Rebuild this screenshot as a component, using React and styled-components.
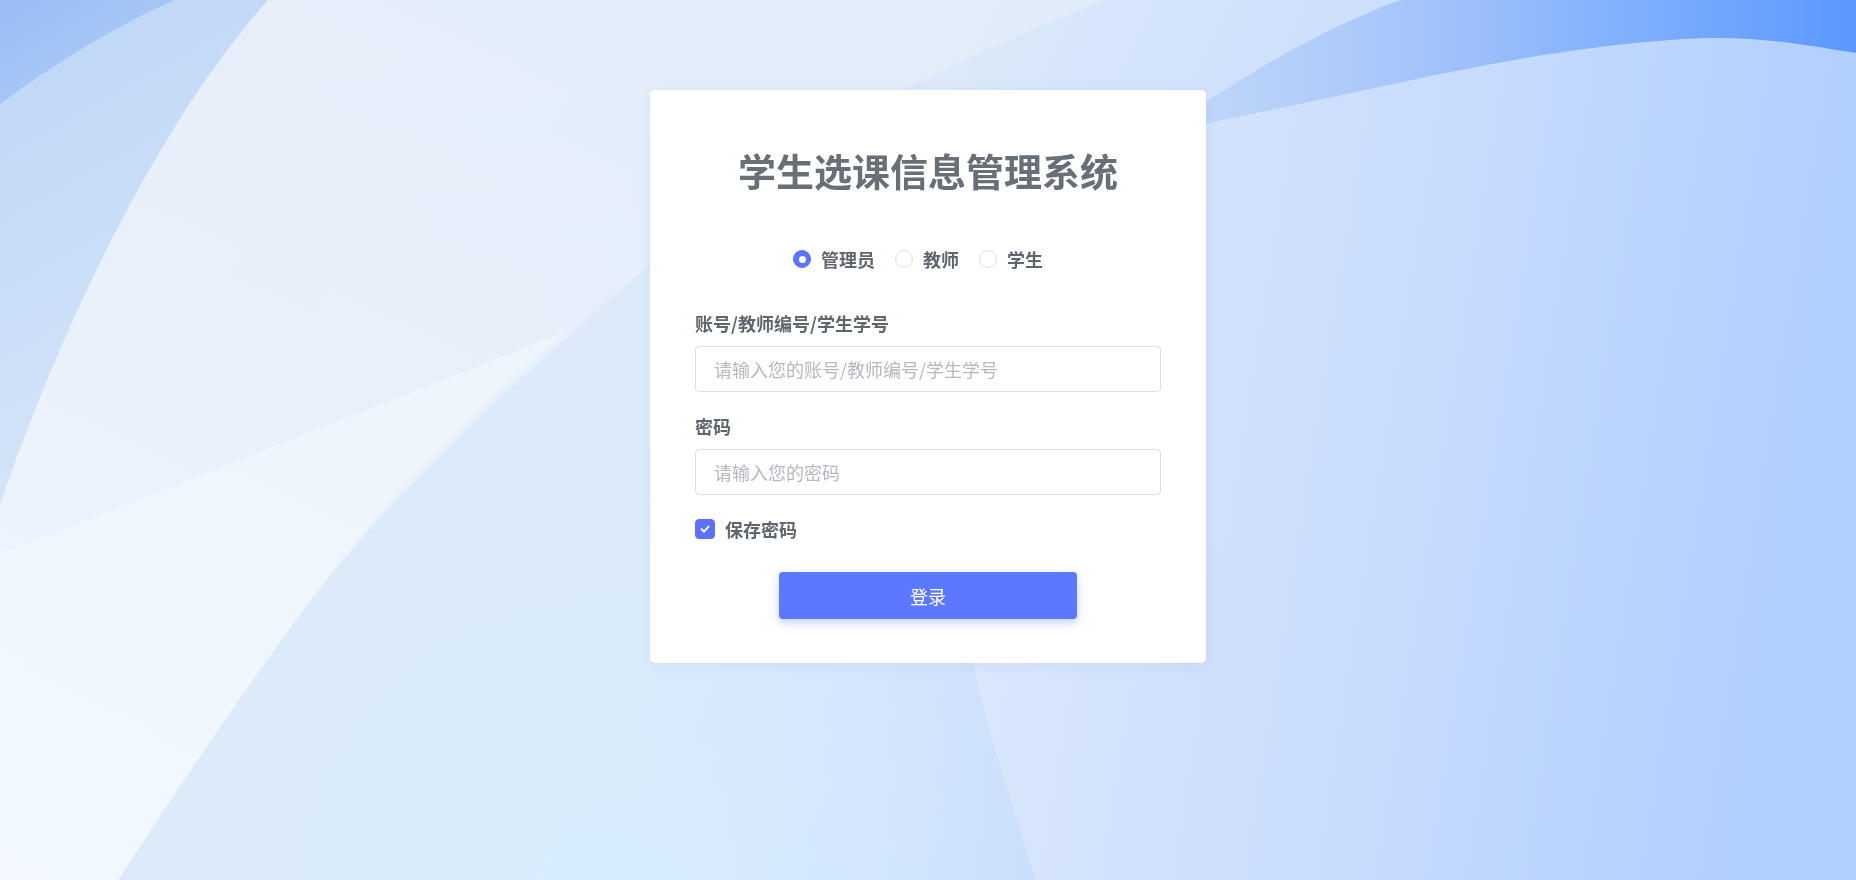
import { useState } from "react";
import styled, { createGlobalStyle } from "styled-components";

const GlobalStyle = createGlobalStyle`
  html, body {
    margin: 0;
    padding: 0;
    height: 100%;
  }
  body {
    font-family: "Noto Sans CJK SC", "Noto Sans", "Liberation Sans", sans-serif;
    color: #60666e;
    overflow: hidden;
  }
  * {
    box-sizing: border-box;
  }
`;

const Backdrop = styled.svg`
  position: fixed;
  inset: 0;
  width: 100%;
  height: 100%;
  z-index: 0;
  display: block;
`;

const Page = styled.main`
  position: relative;
  z-index: 1;
  min-height: 100vh;
  display: flex;
  justify-content: center;
  align-items: flex-start;
  padding-top: 90px;
`;

const Card = styled.section`
  width: 556px;
  padding: 55px 45px 44px;
  background: #fff;
  border-radius: 5px;
  box-shadow: 0 2px 14px rgba(80, 120, 200, 0.08);
`;

const Title = styled.h1`
  margin: 0;
  text-align: center;
  font-size: 38px;
  line-height: 50px;
  font-weight: 700;
  color: #686f77;
`;

const RoleGroup = styled.div`
  margin-top: 52px;
  display: flex;
  justify-content: center;
`;

const RoleOption = styled.label`
  display: flex;
  align-items: center;
  gap: 10px;
  margin-right: 20px;
  height: 24px;
  cursor: pointer;
  font-size: 18px;
  font-weight: 700;
  color: #60666e;
  user-select: none;
`;

const RadioDot = styled.span`
  width: 18px;
  height: 18px;
  border-radius: 50%;
  border: 1px solid ${(p) => (p.$on ? "#5b72ff" : "#dcdfe6")};
  background: ${(p) => (p.$on ? "#5b72ff" : "#fff")};
  display: flex;
  align-items: center;
  justify-content: center;
  &::after {
    content: "";
    width: 7px;
    height: 7px;
    border-radius: 50%;
    background: #fff;
    display: ${(p) => (p.$on ? "block" : "none")};
  }
`;

const Form = styled.form`
  margin-top: 40px;
`;

const Field = styled.div`
  & + & {
    margin-top: 22px;
  }
`;

const FieldLabel = styled.label`
  display: block;
  margin-bottom: 11px;
  font-size: 18px;
  line-height: 24px;
  font-weight: 700;
  color: #60666e;
`;

const TextInput = styled.input`
  display: block;
  width: 100%;
  height: 46px;
  padding: 0 18px;
  border: 1px solid #dcdfe6;
  border-radius: 4px;
  background: #fff;
  font-family: inherit;
  font-size: 18px;
  color: #60666e;
  outline: none;
  &::placeholder {
    color: #b4b8bf;
  }
  &:focus {
    border-color: #5c78ff;
  }
`;

const Remember = styled.label`
  margin-top: 22px;
  display: flex;
  align-items: center;
  gap: 10px;
  height: 24px;
  font-size: 18px;
  font-weight: 700;
  color: #60666e;
  cursor: pointer;
  user-select: none;
`;

const CheckBox = styled.span`
  width: 20px;
  height: 20px;
  border-radius: 4px;
  border: 1px solid ${(p) => (p.$on ? "#5e72f9" : "#dcdfe6")};
  background: ${(p) => (p.$on ? "#5e72f9" : "#fff")};
  display: flex;
  align-items: center;
  justify-content: center;
  svg {
    display: ${(p) => (p.$on ? "block" : "none")};
  }
`;

const SubmitButton = styled.button`
  display: block;
  margin: 31px auto 0;
  width: 298px;
  height: 47px;
  border: none;
  border-radius: 4px;
  background: #5c78ff;
  color: #fff;
  font-family: inherit;
  font-size: 18px;
  cursor: pointer;
  box-shadow: 0 4px 10px rgba(92, 120, 255, 0.35);
  &:hover {
    background: #6f87ff;
  }
`;

const roles = [
  { key: "admin", label: "管理员" },
  { key: "teacher", label: "教师" },
  { key: "student", label: "学生" },
];

// decorative wallpaper, drawn once behind the page
const Wallpaper = () => (
  <Backdrop viewBox="0 0 1856 880" preserveAspectRatio="none">
    <defs>
      <linearGradient id="base" x1="0" y1="0" x2="1" y2="0.25">
        <stop offset="0" stopColor="#e0ebf9" />
        <stop offset="0.5" stopColor="#dce9fa" />
        <stop offset="1" stopColor="#b4cffe" />
      </linearGradient>
      <radialGradient id="sky" cx="600" cy="900" r="520" gradientUnits="userSpaceOnUse">
        <stop offset="0" stopColor="#d7edfd" />
        <stop offset="1" stopColor="#d7edfd" stopOpacity="0" />
      </radialGradient>
      <linearGradient id="swoosh" x1="0" y1="1" x2="0.6" y2="0">
        <stop offset="0" stopColor="#f4faff" stopOpacity="0.95" />
        <stop offset="0.45" stopColor="#eef4fc" stopOpacity="0.7" />
        <stop offset="1" stopColor="#e8eff9" stopOpacity="0.55" />
      </linearGradient>
      <linearGradient id="leftBlue" x1="0" y1="0" x2="0.3" y2="1">
        <stop offset="0" stopColor="#bcd5f7" />
        <stop offset="1" stopColor="#d6e5f8" />
      </linearGradient>
      <linearGradient id="corner" x1="0" y1="0" x2="1" y2="1">
        <stop offset="0" stopColor="#98bdf5" />
        <stop offset="1" stopColor="#b2cef6" />
      </linearGradient>
      <linearGradient id="rightShape" x1="0" y1="0" x2="1" y2="0.15">
        <stop offset="0" stopColor="#dfeafb" />
        <stop offset="0.55" stopColor="#c8dcfd" />
        <stop offset="1" stopColor="#b0cefe" />
      </linearGradient>
      <linearGradient id="band" x1="0" y1="0" x2="1" y2="0">
        <stop offset="0" stopColor="#c6daf8" />
        <stop offset="0.4" stopColor="#a2c3fa" />
        <stop offset="1" stopColor="#5a98ff" />
      </linearGradient>
    </defs>
    <rect width="1856" height="880" fill="url(#base)" />
    <rect width="1856" height="880" fill="url(#sky)" />
    <path d="M0 0 L268 0 C170 110 70 300 0 505 Z" fill="url(#leftBlue)" />
    <path d="M0 0 L174 0 Q86 40 0 104 Z" fill="url(#corner)" />
    <path
      d="M268 0 L1105 0 C1030 30 960 60 904 90 C800 150 720 200 650 264 C520 380 400 480 296 620 C230 710 170 800 118 880 L0 880 L0 505 C70 300 170 110 268 0 Z"
      fill="url(#swoosh)"
    />
    <path
      d="M0 554 L567 331 C440 440 360 530 296 620 C230 710 170 800 118 880 L0 880 Z"
      fill="#f3f9ff"
      opacity="0.55"
    />
    <path
      d="M1035 880 C1000 760 975 700 968 620 C955 420 1010 200 1209 123 C1400 80 1600 32 1706 38 C1780 42 1820 46 1856 53 L1856 880 Z"
      fill="url(#rightShape)"
    />
    <path
      d="M1150 140 C1250 70 1330 25 1401 0 L1856 0 L1856 53 C1800 44 1760 37 1706 38 C1550 44 1400 84 1209 123 Z"
      fill="url(#band)"
    />
  </Backdrop>
);

const App = () => {
  const [role, setRole] = useState("admin");
  const [remember, setRemember] = useState(true);

  return (
    <>
      <GlobalStyle />
      <Wallpaper />
      <Page>
        <Card>
          <Title>学生选课信息管理系统</Title>
          <RoleGroup role="radiogroup">
            {roles.map((r) => (
              <RoleOption key={r.key} onClick={() => setRole(r.key)}>
                <RadioDot $on={role === r.key} />
                {r.label}
              </RoleOption>
            ))}
          </RoleGroup>
          <Form onSubmit={(e) => e.preventDefault()}>
            <Field>
              <FieldLabel htmlFor="account">账号/教师编号/学生学号</FieldLabel>
              <TextInput
                id="account"
                placeholder="请输入您的账号/教师编号/学生学号"
              />
            </Field>
            <Field>
              <FieldLabel htmlFor="password">密码</FieldLabel>
              <TextInput
                id="password"
                type="password"
                placeholder="请输入您的密码"
              />
            </Field>
            <Remember onClick={() => setRemember(!remember)}>
              <CheckBox $on={remember}>
                <svg width="12" height="12" viewBox="0 0 12 12">
                  <path
                    d="M2.5 6.3 L5 8.6 L9.6 3.6"
                    fill="none"
                    stroke="#fff"
                    strokeWidth="2"
                    strokeLinecap="round"
                    strokeLinejoin="round"
                  />
                </svg>
              </CheckBox>
              保存密码
            </Remember>
            <SubmitButton type="submit">登录</SubmitButton>
          </Form>
        </Card>
      </Page>
    </>
  );
};

export default App;
